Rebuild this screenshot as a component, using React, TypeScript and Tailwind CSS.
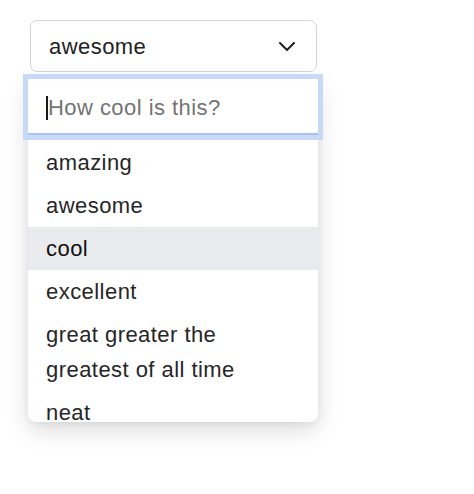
import { useState } from 'react';

const options = [
  'amazing',
  'awesome',
  'cool',
  'excellent',
  'great greater the greatest of all time',
  'neat',
];

export default function App() {
  const [active] = useState('cool');

  return (
    <div className="w-[474px] h-[494px] bg-white pt-[20px] font-['Liberation_Sans',Arial,sans-serif] tracking-[0.45px]">
      <button className="ml-[30px] w-[287px] h-[52px] flex items-center justify-between pl-[18px] pr-[21px] border border-[#d4d4d8] rounded-[7px] bg-white text-[22px] text-[#222222] tracking-[0.45px]">
        <span>awesome</span>
        <svg width="16" height="9" viewBox="0 0 16 9" fill="none">
          <path d="M1 1l7 7 7-7" stroke="#1f1f1f" strokeWidth="2" strokeLinecap="round" strokeLinejoin="round" />
        </svg>
      </button>

      <div className="ml-[28px] mt-[7px] w-[290px] bg-white rounded-b-lg shadow-[0_8px_24px_rgba(0,0,0,0.14),0_2px_6px_rgba(0,0,0,0.06)]">
        <div className="relative">
          <input
            readOnly
            placeholder="How cool is this?"
            className="block w-full h-[56px] pl-[20px] pt-[3px] bg-white border-b-2 border-[#a9c2ef] ring-[5px] ring-[#c8d8f7] outline-none text-[22px] tracking-[0.45px] text-[#222222] placeholder:text-[#737373]"
          />
          <span className="absolute left-[18px] top-[17px] w-[2px] h-[24px] bg-[#1a1a1a]" />
        </div>
        <ul className="h-[287px] overflow-hidden pt-[6px] rounded-b-lg">
          {options.map((o) => (
            <li
              key={o}
              className={`pl-[18px] pr-[36px] py-[4px] text-[22px] leading-[35px] ${
                o === active ? 'bg-[#e9eaee] text-[#111111]' : 'text-[#262626]'
              }`}
            >
              {o}
            </li>
          ))}
        </ul>
      </div>
    </div>
  );
}
